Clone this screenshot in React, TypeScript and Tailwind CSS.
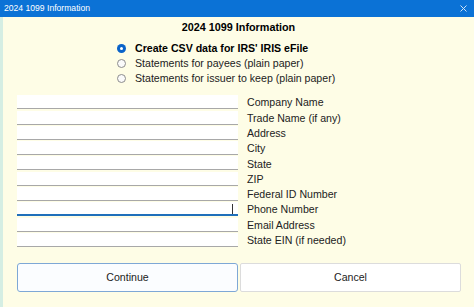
import React from "react";

const fields = [
  "Company Name",
  "Trade Name (if any)",
  "Address",
  "City",
  "State",
  "ZIP",
  "Federal ID Number",
  "Phone Number",
  "Email Address",
  "State EIN (if needed)",
];

const options = [
  { label: "Create CSV data for IRS' IRIS eFile", checked: true },
  { label: "Statements for payees (plain paper)", checked: false },
  { label: "Statements for issuer to keep (plain paper)", checked: false },
];

function Radio({ checked }: { checked: boolean }) {
  if (checked) {
    return (
      <span className="flex h-[9px] w-[9px] items-center justify-center rounded-full bg-[#0a63c9]">
        <span className="h-[3px] w-[3px] rounded-full bg-white" />
      </span>
    );
  }
  return <span className="h-[9px] w-[9px] rounded-full border border-[#8c8c8c] bg-[#fafafa]" />;
}

export default function App() {
  return (
    <div
      className="flex h-[307px] w-[474px] flex-col overflow-hidden text-[10.6px] text-[#1a1a1a]"
      style={{ fontFamily: '"Liberation Sans", Arial, sans-serif' }}
    >
      <div className="flex h-[17px] items-center justify-between bg-[#0b72d6] pl-[4px] pr-[7px] text-white">
        <span className="text-[8.6px]">2024 1099 Information</span>
        <svg width="7" height="7" viewBox="0 0 7 7" className="opacity-80">
          <path d="M0.5 0.5L6.5 6.5M6.5 0.5L0.5 6.5" stroke="white" strokeWidth="1" />
        </svg>
      </div>

      <div className="flex flex-1">
        <div className="w-[3px] bg-[#d5eee3]" />
        <div className="flex flex-1 flex-col bg-[#fefde6]">
          <div className="mt-[2px] h-[16px] text-center text-[10.8px] font-bold leading-[16px] text-black">
            2024 1099 Information
          </div>

          <div className="mt-[6px] ml-[114px] flex flex-col">
            {options.map((o) => (
              <div key={o.label} className="flex h-[15px] items-center gap-[9px]">
                <Radio checked={o.checked} />
                <span className={o.checked ? "font-bold text-black" : "text-[#222]"}>{o.label}</span>
              </div>
            ))}
          </div>

          <div className="mt-[8px] flex flex-col">
            {fields.map((f, i) => (
              <div key={f} className="flex h-[15.3px] items-end">
                <div
                  className={
                    i === 7
                      ? "relative ml-[14px] h-[14px] w-[221px] border-b-2 border-[#1f6fba] bg-white"
                      : "ml-[14px] h-[14px] w-[221px] border-b border-[#a8a8a8] bg-white"
                  }
                >
                  {i === 7 && <span className="absolute right-[5px] top-[2px] h-[10px] w-px bg-[#333]" />}
                </div>
                <span className="ml-[9px] mt-[2px] self-center leading-none text-[#222]">{f}</span>
              </div>
            ))}
          </div>

          <div className="mt-[16px] ml-[14px] flex gap-[2px]">
            <button className="flex h-[29px] w-[221px] items-center justify-center rounded-[3px] border border-[#7ea8d6] bg-[#fbfdff] text-[#222]">
              Continue
            </button>
            <button className="flex h-[29px] w-[221px] items-center justify-center rounded-[2px] border border-[#dcdcdc] bg-white text-[#222]">
              Cancel
            </button>
          </div>
        </div>
      </div>
    </div>
  );
}
